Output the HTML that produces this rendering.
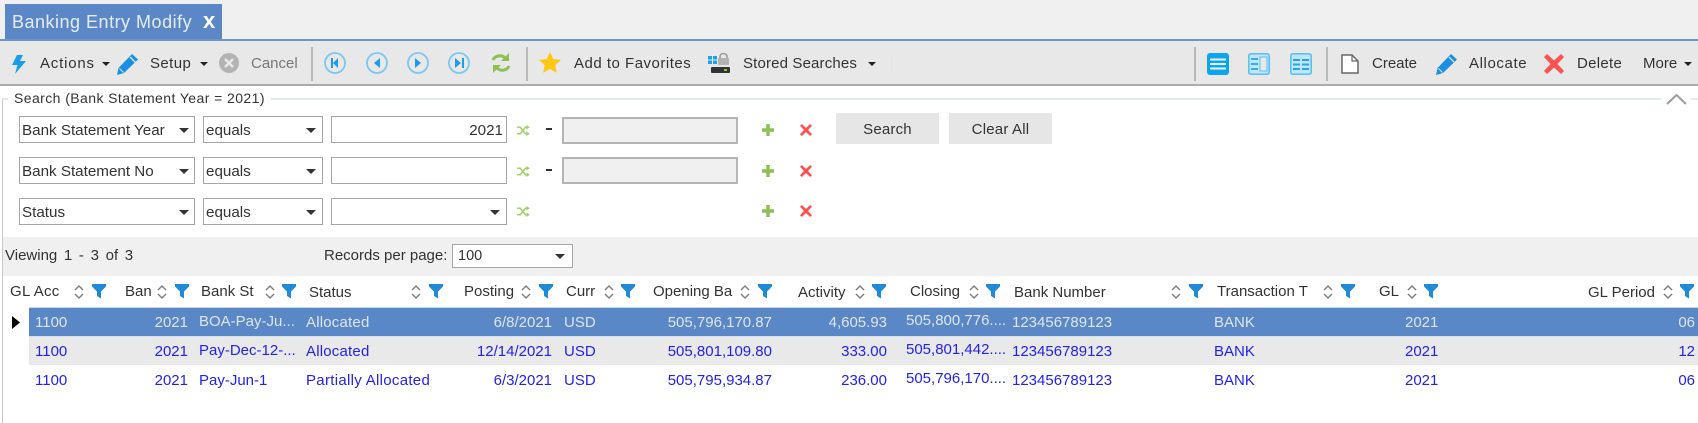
<!DOCTYPE html>
<html><head><meta charset="utf-8"><title>Banking Entry Modify</title>
<style>
html,body{margin:0;padding:0;background:#fff}
#p{position:relative;width:1698px;height:423px;overflow:hidden;background:#fff;font-family:"Liberation Sans",sans-serif;font-size:15px;color:#333;filter:blur(.35px)}
#p div,#p span,#p svg.a{position:absolute}
#p span{white-space:nowrap;line-height:20px}
.b{background:#fff;border:1px solid #a6a6a6;box-sizing:border-box;height:27px}
.c{width:0;height:0;border-left:5px solid transparent;border-right:5px solid transparent;border-top:5px solid #333}
.k{width:0;height:0;border-left:4px solid transparent;border-right:4px solid transparent;border-top:4px solid #222}
.f{font-size:15.200px}
.s{color:#2222ee}
.w{color:#dfe5f0}
.h{color:#333}
</style></head><body>
<svg width="0" height="0" style="position:absolute">
<defs>
<symbol id="sort" viewBox="0 0 12 18"><path d="M2 7l4-4 4 4M2 11l4 4 4-4" fill="none" stroke="#808080" stroke-width="1.500"/></symbol>
<symbol id="fun" viewBox="0 0 14 16"><path d="M0 1h14v2.500L9 8.500V15.500L5 13V8.500L0 3.500z" fill="#1f8ad8"/></symbol>
<symbol id="pen" viewBox="0 0 23 22"><path d="M16 1l6 5.500L8 20l-7 2 1.500-7z" fill="#1a8fe3"/><path d="M14 4l5.500 5.500" stroke="#e8e8e8" stroke-width="1.300"/><path d="M3.500 15.500l4 4" stroke="#e8e8e8" stroke-width="1"/></symbol>
<symbol id="x" viewBox="0 0 20 20"><path d="M3 0l7 6.500L17 0l3 3-6.500 7L20 17l-3 3-7-6.500L3 20l-3-3 6.500-7L0 3z" fill="#fb5252"/></symbol>
<symbol id="swap" viewBox="0 0 14 12"><path d="M0 2.500h3.500l5.500 7h2M0 9.500h3.500l5.500-7h2" fill="none" stroke="#a5d070" stroke-width="1.800"/><path d="M10 0l4 2.500-4 2.500zM10 7l4 2.500-4 2.500z" fill="#a5d070"/></symbol>
<symbol id="plus" viewBox="0 0 14 14"><path d="M5 0h4v5h5v4H9v5H5V9H0V5h5z" fill="#8cc152"/></symbol>
</defs></svg>
<div id="p">
<div style="left:0;top:0;width:1698px;height:39px;background:#f0f0f0"></div>
<div style="left:5px;top:4px;width:217px;height:36px;background:#5b87c6"></div>
<span style="left:12px;top:12px;font-size:18px;letter-spacing:.5px;color:#e6ecf6">Banking Entry Modify</span>
<span style="left:203px;top:11px;font-size:22px;font-weight:bold;color:#fff">x</span>

<div style="left:0;top:39px;width:1698px;height:47px;background:#e8e8e8;border-top:2px solid #6e94c9;border-bottom:2px solid #ababab;box-sizing:border-box"></div>
<svg class="a" style="left:12px;top:55px" width="14" height="19" viewBox="0 0 14 19"><path d="M5 0h6L8 6h6L3 19l2.500-9H0z" fill="#1a9ce8"/></svg>
<span style="left:40px;top:54px;letter-spacing:.8px">Actions</span><div class="k" style="left:102px;top:62px"></div>
<svg class="a" style="left:116px;top:53px" width="23" height="22"><use href="#pen"/></svg>
<span style="left:150px;top:54px;letter-spacing:.4px">Setup</span><div class="k" style="left:200px;top:62px"></div>
<svg class="a" style="left:219px;top:53px" width="20" height="20" viewBox="0 0 20 20"><circle cx="10" cy="10" r="10" fill="#b3b3b3"/><path d="M6 6l8 8M14 6l-8 8" stroke="#e8e8e8" stroke-width="2.500"/></svg>
<span style="left:251px;top:54px;color:#777">Cancel</span>
<div style="left:311px;top:47px;width:2px;height:34px;background:#b9b9b9"></div>
<svg class="a" style="left:323px;top:51px" width="200" height="24" viewBox="0 0 200 24">
<g fill="none" stroke="#7cc6f2" stroke-width="1.800"><circle cx="12" cy="12" r="10"/><circle cx="54" cy="12" r="10"/><circle cx="95" cy="12" r="10"/><circle cx="136" cy="12" r="10"/></g>
<g fill="#1f9bea"><path d="M8 7h2v10H8zM15 7v10l-5-5z"/><path d="M57 7v10l-6-5z"/><path d="M92 7v10l6-5z"/><path d="M139 7h2v10h-2zM132 7v10l6-5z"/><path d="M8 7h2v10H8z"/></g>
<path d="M170 9c1.500-4 8-6 12-2M186 15c-1.500 4-8 6-12 2" fill="none" stroke="#8cc152" stroke-width="3"/><path d="M186 2v8h-8zM170 22v-8h8z" fill="#8cc152"/>
</svg>
<div style="left:526px;top:47px;width:2px;height:34px;background:#b9b9b9"></div>
<svg class="a" style="left:539px;top:52px" width="22" height="21" viewBox="0 0 22 21"><path d="M11 0l3.300 7 7.700.9-5.700 5.200 1.500 7.600L11 17l-6.800 3.700 1.500-7.600L0 7.900 7.700 7z" fill="#fdc715"/></svg>
<span style="left:574px;top:54px;letter-spacing:.5px">Add to Favorites</span>
<svg class="a" style="left:708px;top:53px" width="22" height="21" viewBox="0 0 22 21"><g fill="#1fa0ea"><rect x="0" y="3" width="4" height="3.500"/><rect x="5" y="3" width="4" height="3.500"/><rect x="0" y="7.500" width="4" height="3.500"/><rect x="5" y="7.500" width="4" height="3.500"/></g><path d="M12 5V3.500a3.500 3 0 0 1 7 0V5" fill="none" stroke="#9a9a9a" stroke-width="1.500"/><rect x="10" y="5" width="11" height="7" fill="#b3b3b3"/><rect x="3" y="14" width="19" height="6" rx="1" fill="#333"/><rect x="16" y="16" width="3" height="2" fill="#7ed321"/></svg>
<span style="left:743px;top:54px;letter-spacing:.15px">Stored Searches</span><div class="k" style="left:868px;top:62px"></div>
<div style="left:891px;top:54px;width:1px;height:20px;background:#dfe4ec"></div>
<div style="left:1194px;top:47px;width:2px;height:34px;background:#b9b9b9"></div>
<svg class="a" style="left:1207px;top:53px" width="105" height="22" viewBox="0 0 105 22">
<rect width="22" height="22" rx="3" fill="#0ea5f0"/><path d="M3 6.500h16M3 11h16M3 15.500h16" stroke="#e8f6fe" stroke-width="2"/>
<rect x="41.800" y=".8" width="20.400" height="20.400" rx="2" fill="#bfe6fb" stroke="#5cc0f5" stroke-width="1.600"/><rect x="53" y="4" width="7" height="14" fill="#e8e8e8" stroke="#5cc0f5"/><path d="M44 6h7M44 11h7M44 16h7" stroke="#1fa5f0" stroke-width="1.800"/>
<rect x="83.800" y=".8" width="20.400" height="20.400" rx="2" fill="#bfe6fb" stroke="#5cc0f5" stroke-width="1.600"/><path d="M86 7h7M95 7h7M86 11.500h7M95 11.500h7M86 16h7M95 16h7" stroke="#1fa5f0" stroke-width="2"/>
</svg>
<div style="left:1326px;top:47px;width:2px;height:34px;background:#b9b9b9"></div>
<svg class="a" style="left:1341px;top:54px" width="18" height="20" viewBox="0 0 18 20"><path d="M1 1h10l6 6v12H1z" fill="#fff" stroke="#666" stroke-width="1.500"/><path d="M11 1v6h6" fill="none" stroke="#666" stroke-width="1.200"/></svg>
<span style="left:1372px;top:54px">Create</span>
<svg class="a" style="left:1435px;top:53px" width="23" height="22"><use href="#pen"/></svg>
<span style="left:1469px;top:54px;letter-spacing:.6px">Allocate</span>
<svg class="a" style="left:1544px;top:54px" width="20" height="20"><use href="#x"/></svg>
<span style="left:1577px;top:54px;letter-spacing:.3px">Delete</span>
<span style="left:1643px;top:54px">More</span><div class="k" style="left:1684px;top:62px"></div>

<div style="left:2px;top:98px;width:1px;height:325px;background:#c8c8c8"></div>
<div style="left:2px;top:98px;width:1696px;height:2px;background:#e4e9f0"></div>
<span style="left:8px;top:88px;background:#fff;padding:0 6px;font-size:14px;letter-spacing:.03em">Search (Bank Statement Year = 2021)</span>
<div style="left:1661px;top:88px;width:30px;height:18px;background:#fff"></div>
<svg class="a" style="left:1666px;top:93px" width="21" height="12" viewBox="0 0 21 12"><path d="M1 11l9.500-9 9.500 9" fill="none" stroke="#9c9c9c" stroke-width="2"/></svg>

<!-- filter row 1 -->
<div class="b" style="left:19px;top:116px;width:176px"></div><span class="f" style="left:22px;top:121px">Bank Statement Year</span><div class="c" style="left:179px;top:128px"></div>
<div class="b" style="left:203px;top:116px;width:120px"></div><span class="f" style="left:206px;top:121px">equals</span><div class="c" style="left:306px;top:128px"></div>
<div class="b" style="left:331px;top:116px;width:176px"></div><span class="f" style="right:1195px;top:121px">2021</span>
<svg class="a" style="left:517px;top:125px" width="13" height="11"><use href="#swap"/></svg><div style="left:546px;top:128px;width:6px;height:1.500px;background:#333"></div>
<div class="b" style="left:562px;top:117px;width:176px;background:#f0f0f0;border:2px solid #b5b5b5"></div>
<svg class="a" style="left:762px;top:124px" width="12" height="12"><use href="#plus"/></svg>
<svg class="a" style="left:800px;top:124px" width="12" height="12"><use href="#x"/></svg>
<div style="left:836px;top:113px;width:103px;height:31px;background:#e6e6e6"></div><span style="left:836px;top:120px;width:103px;text-align:center;letter-spacing:.2px">Search</span>
<div style="left:949px;top:113px;width:103px;height:31px;background:#e6e6e6"></div><span style="left:949px;top:120px;width:103px;text-align:center;letter-spacing:.2px">Clear All</span>
<!-- filter row 2 -->
<div class="b" style="left:19px;top:157px;width:176px"></div><span class="f" style="left:22px;top:162px">Bank Statement No</span><div class="c" style="left:179px;top:169px"></div>
<div class="b" style="left:203px;top:157px;width:120px"></div><span class="f" style="left:206px;top:162px">equals</span><div class="c" style="left:306px;top:169px"></div>
<div class="b" style="left:331px;top:157px;width:176px"></div>
<svg class="a" style="left:517px;top:166px" width="13" height="11"><use href="#swap"/></svg><div style="left:546px;top:169px;width:6px;height:1.500px;background:#333"></div>
<div class="b" style="left:562px;top:157px;width:176px;background:#f0f0f0;border:2px solid #b5b5b5"></div>
<svg class="a" style="left:762px;top:165px" width="12" height="12"><use href="#plus"/></svg>
<svg class="a" style="left:800px;top:165px" width="12" height="12"><use href="#x"/></svg>
<!-- filter row 3 -->
<div class="b" style="left:19px;top:198px;width:176px"></div><span class="f" style="left:22px;top:203px">Status</span><div class="c" style="left:179px;top:210px"></div>
<div class="b" style="left:203px;top:198px;width:120px"></div><span class="f" style="left:206px;top:203px">equals</span><div class="c" style="left:306px;top:210px"></div>
<div class="b" style="left:331px;top:198px;width:176px"></div><div class="c" style="left:490px;top:210px"></div>
<svg class="a" style="left:517px;top:206px" width="13" height="11"><use href="#swap"/></svg>
<svg class="a" style="left:762px;top:205px" width="12" height="12"><use href="#plus"/></svg>
<svg class="a" style="left:800px;top:205px" width="12" height="12"><use href="#x"/></svg>

<!-- pager -->
<div style="left:3px;top:237px;width:1695px;height:39px;background:#f0f0f0"></div>
<span style="left:5px;top:246px;font-size:15px;word-spacing:2.500px">Viewing 1 - 3 of 3</span>
<span style="left:324px;top:246px;font-size:15px">Records per page:</span>
<div class="b" style="left:452px;top:244px;width:121px;height:24px"></div><span style="left:458px;top:246px;font-size:14.500px">100</span><div class="c" style="left:555px;top:254px"></div>

<!-- header -->
<span class="h" style="left:10px;top:282px;letter-spacing:.3px">GL Acc</span>
<span class="h" style="left:125px;top:282px">Ban</span>
<span class="h" style="left:201px;top:282px">Bank St</span>
<span class="h" style="left:309px;top:283px">Status</span>
<span class="h" style="left:464px;top:282px">Posting</span>
<span class="h" style="left:566px;top:282px">Curr</span>
<span class="h" style="left:653px;top:282px">Opening Ba</span>
<span class="h" style="left:798px;top:283px">Activity</span>
<span class="h" style="left:910px;top:282px">Closing</span>
<span class="h" style="left:1014px;top:283px">Bank Number</span>
<span class="h" style="left:1217px;top:282px">Transaction T</span>
<span class="h" style="left:1379px;top:282px">GL</span>
<span class="h" style="left:1588px;top:283px">GL Period</span>
<svg class="a" style="left:73px;top:283px" width="12" height="18"><use href="#sort"/></svg><svg class="a" style="left:92px;top:283px" width="14" height="16"><use href="#fun"/></svg>
<svg class="a" style="left:156px;top:283px" width="12" height="18"><use href="#sort"/></svg><svg class="a" style="left:175px;top:283px" width="14" height="16"><use href="#fun"/></svg>
<svg class="a" style="left:264px;top:283px" width="12" height="18"><use href="#sort"/></svg><svg class="a" style="left:282px;top:283px" width="14" height="16"><use href="#fun"/></svg>
<svg class="a" style="left:410px;top:283px" width="12" height="18"><use href="#sort"/></svg><svg class="a" style="left:429px;top:283px" width="14" height="16"><use href="#fun"/></svg>
<svg class="a" style="left:520px;top:283px" width="12" height="18"><use href="#sort"/></svg><svg class="a" style="left:539px;top:283px" width="14" height="16"><use href="#fun"/></svg>
<svg class="a" style="left:603px;top:283px" width="12" height="18"><use href="#sort"/></svg><svg class="a" style="left:621px;top:283px" width="14" height="16"><use href="#fun"/></svg>
<svg class="a" style="left:739px;top:283px" width="12" height="18"><use href="#sort"/></svg><svg class="a" style="left:758px;top:283px" width="14" height="16"><use href="#fun"/></svg>
<svg class="a" style="left:854px;top:283px" width="12" height="18"><use href="#sort"/></svg><svg class="a" style="left:872px;top:283px" width="14" height="16"><use href="#fun"/></svg>
<svg class="a" style="left:968px;top:283px" width="12" height="18"><use href="#sort"/></svg><svg class="a" style="left:986px;top:283px" width="14" height="16"><use href="#fun"/></svg>
<svg class="a" style="left:1170px;top:283px" width="12" height="18"><use href="#sort"/></svg><svg class="a" style="left:1189px;top:283px" width="14" height="16"><use href="#fun"/></svg>
<svg class="a" style="left:1322px;top:283px" width="12" height="18"><use href="#sort"/></svg><svg class="a" style="left:1341px;top:283px" width="14" height="16"><use href="#fun"/></svg>
<svg class="a" style="left:1406px;top:283px" width="12" height="18"><use href="#sort"/></svg><svg class="a" style="left:1424px;top:283px" width="14" height="16"><use href="#fun"/></svg>
<svg class="a" style="left:1662px;top:283px" width="12" height="18"><use href="#sort"/></svg><svg class="a" style="left:1680px;top:283px" width="14" height="16"><use href="#fun"/></svg>

<!-- rows -->
<div style="left:29px;top:307px;width:1669px;height:1px;background:#c9d6e8"></div>
<div style="left:29px;top:308px;width:1669px;height:28px;background:#5a87c5"></div>
<div style="left:29px;top:336px;width:1669px;height:1px;background:#d5dfee"></div>
<div style="left:29px;top:337px;width:1669px;height:28px;background:#e9e9e9"></div>
<svg class="a" style="left:12px;top:316px" width="8" height="13" viewBox="0 0 8 13"><path d="M0 0l8 6.500-8 6.500z" fill="#000"/></svg>

<span class="w" style="left:35px;top:313px">1100</span>
<span class="w" style="right:1510px;top:313px">2021</span>
<span class="w" style="left:199px;top:312px">BOA-Pay-Ju...</span>
<span class="w" style="left:306px;top:313px;letter-spacing:.2px">Allocated</span>
<span class="w" style="right:1146px;top:313px">6/8/2021</span>
<span class="w" style="left:564px;top:313px">USD</span>
<span class="w" style="right:926px;top:313px">505,796,170.87</span>
<span class="w" style="right:811px;top:313px">4,605.93</span>
<span class="w" style="left:906px;top:311px">505,800,776....</span>
<span class="w" style="left:1012px;top:313px">123456789123</span>
<span class="w" style="left:1214px;top:313px">BANK</span>
<span class="w" style="left:1405px;top:313px">2021</span>
<span class="w" style="right:3px;top:313px">06</span>

<span class="s" style="left:35px;top:342px">1100</span>
<span class="s" style="right:1510px;top:342px">2021</span>
<span class="s" style="left:199px;top:341px">Pay-Dec-12-...</span>
<span class="s" style="left:306px;top:342px;letter-spacing:.2px">Allocated</span>
<span class="s" style="right:1146px;top:342px">12/14/2021</span>
<span class="s" style="left:564px;top:342px">USD</span>
<span class="s" style="right:926px;top:342px">505,801,109.80</span>
<span class="s" style="right:811px;top:342px">333.00</span>
<span class="s" style="left:906px;top:340px">505,801,442....</span>
<span class="s" style="left:1012px;top:342px">123456789123</span>
<span class="s" style="left:1214px;top:342px">BANK</span>
<span class="s" style="left:1405px;top:342px">2021</span>
<span class="s" style="right:3px;top:342px">12</span>

<span class="s" style="left:35px;top:371px">1100</span>
<span class="s" style="right:1510px;top:371px">2021</span>
<span class="s" style="left:199px;top:371px">Pay-Jun-1</span>
<span class="s" style="left:306px;top:371px;letter-spacing:.3px">Partially Allocated</span>
<span class="s" style="right:1146px;top:371px">6/3/2021</span>
<span class="s" style="left:564px;top:371px">USD</span>
<span class="s" style="right:926px;top:371px">505,795,934.87</span>
<span class="s" style="right:811px;top:371px">236.00</span>
<span class="s" style="left:906px;top:369px">505,796,170....</span>
<span class="s" style="left:1012px;top:371px">123456789123</span>
<span class="s" style="left:1214px;top:371px">BANK</span>
<span class="s" style="left:1405px;top:371px">2021</span>
<span class="s" style="right:3px;top:371px">06</span>
</div>
</body></html>
